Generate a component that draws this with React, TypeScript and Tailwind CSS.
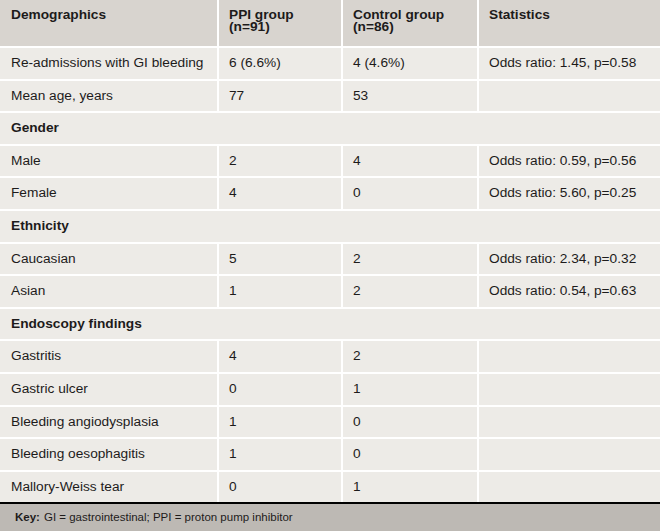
import React from "react";

type Row =
  | { kind: "section"; label: string }
  | { kind: "data"; cells: [string, string, string, string] };

const rows: Row[] = [
  { kind: "data", cells: ["Re-admissions with GI bleeding", "6 (6.6%)", "4 (4.6%)", "Odds ratio: 1.45, p=0.58"] },
  { kind: "data", cells: ["Mean age, years", "77", "53", ""] },
  { kind: "section", label: "Gender" },
  { kind: "data", cells: ["Male", "2", "4", "Odds ratio: 0.59, p=0.56"] },
  { kind: "data", cells: ["Female", "4", "0", "Odds ratio: 5.60, p=0.25"] },
  { kind: "section", label: "Ethnicity" },
  { kind: "data", cells: ["Caucasian", "5", "2", "Odds ratio: 2.34, p=0.32"] },
  { kind: "data", cells: ["Asian", "1", "2", "Odds ratio: 0.54, p=0.63"] },
  { kind: "section", label: "Endoscopy findings" },
  { kind: "data", cells: ["Gastritis", "4", "2", ""] },
  { kind: "data", cells: ["Gastric ulcer", "0", "1", ""] },
  { kind: "data", cells: ["Bleeding angiodysplasia", "1", "0", ""] },
  { kind: "data", cells: ["Bleeding oesophagitis", "1", "0", ""] },
  { kind: "data", cells: ["Mallory-Weiss tear", "0", "1", ""] },
];

const headers = ["Demographics", "PPI group\n(n=91)", "Control group\n(n=86)", "Statistics"];

export default function App() {
  return (
    <div
      className="w-[660px] h-[531px] bg-white text-[#1d1b1b] overflow-hidden"
      style={{ fontFamily: '"Liberation Sans", Arial, sans-serif' }}
    >
      <div className="grid grid-cols-[217px_122px_134px_181px] gap-x-[2px] gap-y-[2px] bg-white">
        {/* Header */}
        {headers.map((h, i) => (
          <div
            key={i}
            className={`h-[46px] bg-[#d8d4cf] pt-[9px] font-bold text-[13.7px] leading-[12px] whitespace-pre-line ${
              i === 0 ? "pl-[11px]" : "pl-[10px]"
            }`}
          >
            {h}
          </div>
        ))}

        {/* Body */}
        {rows.map((r, ri) =>
          r.kind === "section" ? (
            <div
              key={ri}
              className="col-span-4 h-[30.6px] bg-[#edebe7] flex items-center pl-[11px] font-bold text-[13.7px]"
            >
              {r.label}
            </div>
          ) : (
            r.cells.map((c, ci) => (
              <div
                key={`${ri}-${ci}`}
                className={`h-[30.6px] bg-[#edebe7] flex items-center text-[13.7px] ${
                  ci === 0 ? "pl-[11px]" : "pl-[10px]"
                }`}
              >
                {c}
              </div>
            ))
          ),
        )}
      </div>

      {/* Key footer */}
      <div className="border-t-2 border-black bg-[#bdb9b4] h-[29px] flex items-center pl-[15px] text-[11.5px]">
        <span className="font-bold">Key:</span>
        <span className="ml-[4px]">GI = gastrointestinal; PPI = proton pump inhibitor</span>
      </div>
    </div>
  );
}
